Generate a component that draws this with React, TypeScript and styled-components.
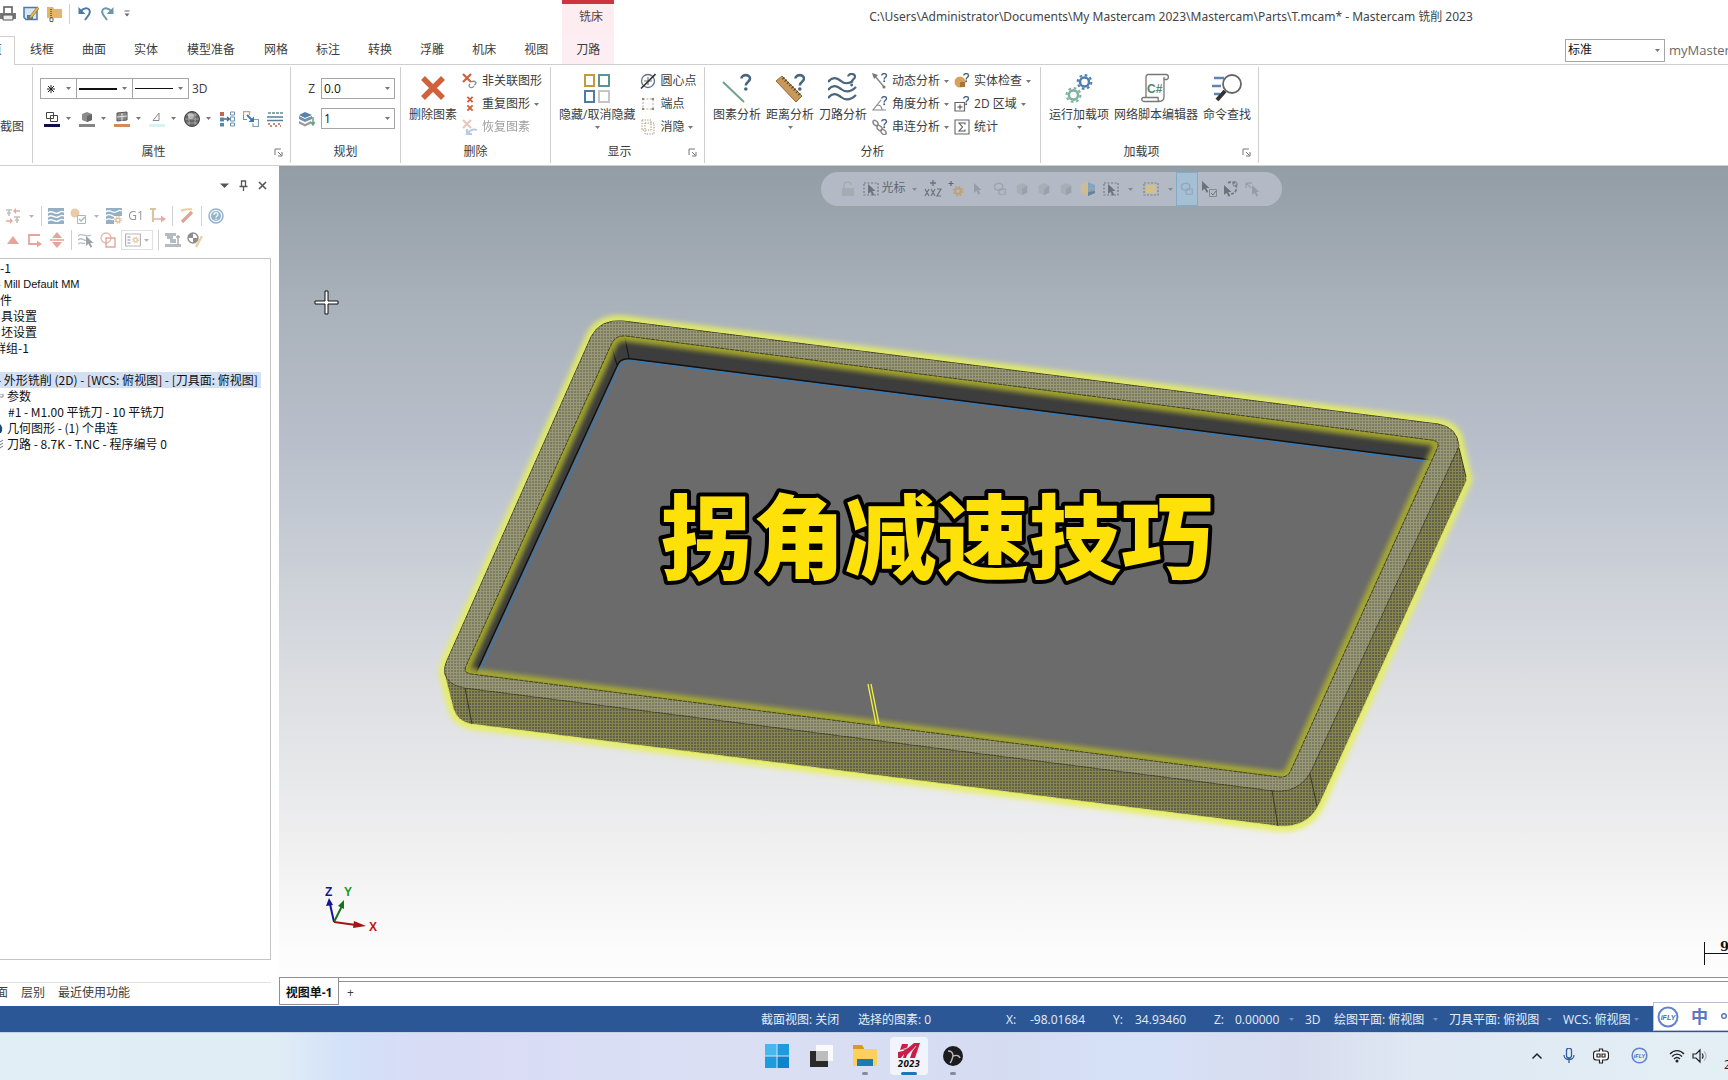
import React from "react";
import styled, { createGlobalStyle, css } from "styled-components";

const sans = `"Open Sans", "Noto Sans", "Noto Sans CJK SC", sans-serif`;
const line = "#cfcfcf";

const Global = createGlobalStyle`
  * { box-sizing: border-box; }
  html, body { margin: 0; height: 100%; }
  body { font: 12px/16px ${sans}; color: #3c3c3c; background: #fff; overflow: hidden; }
  button, select, input { font: inherit; color: inherit; margin: 0; padding: 0; border: 0; background: none; border-radius: 0; }
  svg { display: block; flex: none; }
`;

const Page = styled.div`
  display: flex;
  flex-direction: column;
  height: 100vh;
  overflow: hidden;
  white-space: nowrap;
`;

/* ---------- title bar and tabs ---------- */
const TitleBar = styled.header`
  display: flex;
  flex: none;
  height: 36px;
`;
const QuickAccess = styled.div`
  display: flex;
  width: 562px;
  height: 28px;
  align-items: center;
  gap: 7px;
`;
const QuickButton = styled.button<{ $w?: number }>`
  display: flex;
  width: ${(p) => p.$w ?? 16}px;
  justify-content: center;
`;
const QuickSep = styled.span`
  width: 1px;
  height: 20px;
  background: ${line};
`;
const ContextHead = styled.div`
  width: 52px;
  padding: 5px 0 0 17px;
  border-top: 4px solid #cb3440;
  background: #fdecf0;
  color: #5a3c40;
`;
const WindowTitle = styled.div`
  flex: 1;
  padding-top: 9px;
  text-align: center;
  color: #444;
  font-family: "Noto Sans", "Noto Sans CJK SC", sans-serif;
`;
const TabBar = styled.nav`
  display: flex;
  flex: none;
  height: 29px;
  border-bottom: 1px solid ${line};
`;
const Tab = styled.button<{ $wide?: boolean; $context?: boolean }>`
  padding: 0 ${(p) => (p.$wide ? 15 : 14)}px;
  background: ${(p) => (p.$context ? "#fceef2" : "none")};
`;
const ActiveTab = styled.button`
  display: flex;
  justify-content: flex-end;
  width: 15px;
  height: 29px;
  margin-right: 1px;
  padding: 5px 12px 0 0;
  overflow: hidden;
  border: 1px solid ${line};
  border-width: 1px 1px 0 0;
  background: #fff;
`;
const TabTools = styled.div`
  display: flex;
  align-items: center;
  gap: 4px;
  width: 163px;
  margin-left: auto;
  overflow: hidden;
  font-size: 13px;
  color: #6a6a6a;
`;

const Select = styled.select<{ $w: number; $h?: number }>`
  flex: none;
  width: ${(p) => p.$w}px;
  height: ${(p) => p.$h ?? 21}px;
  padding: 0 14px 0 2px;
  border: 1px solid #a6a6a6;
  appearance: none;
  color: #111;
  font-size: 12px;
  background: #fff url("data:image/svg+xml,%3Csvg xmlns='http://www.w3.org/2000/svg' width='5' height='3'%3E%3Cpath d='M0 0h5L2.5 3z' fill='%23777'/%3E%3C/svg%3E") no-repeat right 4px center;
`;

/* ---------- ribbon ---------- */
const Ribbon = styled.section`
  display: flex;
  flex: none;
  height: 101px;
  padding: 2px 0;
  border-bottom: 1px solid ${line};
`;
const Group = styled.div<{ $w: number }>`
  display: flex;
  flex-direction: column;
  flex: none;
  width: ${(p) => p.$w}px;
  border-right: 1px solid ${line};
`;
const GroupBody = styled.div<{ $gap?: number; $pad?: number }>`
  display: flex;
  flex: 1;
  gap: ${(p) => p.$gap ?? 4}px;
  padding: 0 4px 0 ${(p) => p.$pad ?? 8}px;
`;
const GroupFoot = styled.div`
  display: flex;
  align-items: center;
  height: 20px;
  margin-bottom: 1px;
  text-align: center;
`;
const FootText = styled.span`
  flex: 1;
`;
const Launcher = styled.button`
  display: flex;
  justify-content: flex-start;
  width: 16px;
`;
const Big = styled.button`
  display: flex;
  flex-direction: column;
  align-items: center;
  flex: none;
  padding-top: 6px;
`;
const BigText = styled.span`
  margin: 4px 0 3px;
`;
const SmallCol = styled.div`
  display: flex;
  flex-direction: column;
  padding-top: 3px;
  gap: 1px;
`;
const Small = styled.button<{ $off?: boolean }>`
  display: flex;
  align-items: center;
  gap: 4px;
  height: 22px;
  opacity: ${(p) => (p.$off ? 0.5 : 1)};
`;
const AttrCol = styled.div`
  display: flex;
  flex-direction: column;
  gap: 9px;
  padding-top: 11px;
`;
const AttrRow = styled.div`
  display: flex;
  align-items: center;
  height: 21px;
`;
const Picker = styled.button<{ $w: number }>`
  display: flex;
  align-items: center;
  justify-content: space-between;
  width: ${(p) => p.$w}px;
  height: 21px;
  padding: 0 5px 0 2px;
  border: 1px solid #a6a6a6;
  margin-right: -1px;
`;
const AttrText = styled.span`
  margin-left: 4px;
`;
const Swatch = styled.button<{ $w?: number }>`
  display: flex;
  align-items: center;
  justify-content: space-between;
  width: ${(p) => p.$w ?? 27}px;
  margin: 0 4px;
`;
const FieldLabel = styled.label`
  display: flex;
  align-items: center;
  justify-content: flex-end;
  width: 21px;
  margin-right: 2px;
  padding-right: 4px;
`;
const Snap = styled.div`
  display: flex;
  width: 32px;
  padding-top: 52px;
`;

/* ---------- left panel ---------- */
const Main = styled.main`
  display: flex;
  flex: 1;
  min-height: 0;
`;
const Panel = styled.aside`
  display: flex;
  flex-direction: column;
  flex: none;
  width: 279px;
`;
const PanelHead = styled.div`
  display: flex;
  align-items: center;
  justify-content: flex-end;
  gap: 8px;
  height: 38px;
  padding-right: 11px;
`;
const ToolRow = styled.div`
  display: flex;
  align-items: center;
  gap: 4px;
  height: 24px;
  padding-left: 4px;
  opacity: 0.55;
`;
const Tool = styled.button<{ $w?: number; $boxed?: boolean }>`
  display: flex;
  align-items: center;
  justify-content: center;
  gap: 3px;
  width: ${(p) => p.$w ?? 18}px;
  height: 18px;
  ${(p) => p.$boxed && css`border: 1px solid #c4c8d0; height: 20px;`}
`;
const ToolSep = styled.span`
  width: 1px;
  height: 20px;
  margin: 0 1px;
  background: #aaa;
`;
const Tree = styled.ul`
  flex: 1;
  margin: 6px 8px 0 0;
  padding: 1px 0;
  list-style: none;
  overflow: hidden;
  border: 1px solid #c4c4c4;
  border-left: 0;
  color: #111;
`;
const Node = styled.li<{ $in: number; $on?: boolean; $latin?: boolean }>`
  display: flex;
  align-items: center;
  gap: 3px;
  width: max-content;
  height: 16px;
  padding-left: ${(p) => Math.max(p.$in, 0)}px;
  padding-right: 3px;
  margin-left: ${(p) => Math.min(p.$in, 0)}px;
  font-size: ${(p) => (p.$latin ? 11 : 12)}px;
  font-family: ${(p) => (p.$latin ? `"Liberation Sans"` : `"Noto Sans CJK SC"`)}, sans-serif;
  background: ${(p) => (p.$on ? "#d3dff2" : "none")};
`;
const PanelTabs = styled.div`
  display: flex;
  gap: 13px;
  height: 24px;
  margin: 22px 8px 0 -4px;
  padding-bottom: 4px;
  border-top: 1px solid #e2e2e2;
`;
const PlainButton = styled.button``;

/* ---------- viewport ---------- */
const View = styled.section`
  display: flex;
  flex-direction: column;
  flex: 1;
  min-width: 0;
`;
const Canvas = styled.div`
  position: relative;
  flex: 1;
  min-height: 0;
  background: linear-gradient(#929da5, #a9b1ba 17%, #b8bfca 34%, #c9ced6 48%, #dcdee2 64%, #eeeeef 82%, #fcfcfc 97%, #fdfdfd);
`;
const Scene = styled.svg`
  width: 100%;
  height: 100%;
`;
const FloatBar = styled.div`
  position: absolute;
  top: 6px;
  left: 542px;
  display: flex;
  align-items: center;
  height: 34px;
  padding: 0 18px 0 16px;
  border-radius: 17px;
  background: #b3bac5;
  color: #5f6670;
`;
const FloatButton = styled.button<{ $w?: number; $on?: boolean; $dim?: boolean }>`
  display: flex;
  align-items: center;
  justify-content: center;
  gap: 2px;
  width: ${(p) => p.$w ?? 22}px;
  height: 34px;
  ${(p) => p.$on && css`border: 1px solid #83abc9; background: #a5bfd4;`}
  & > svg { opacity: ${(p) => (p.$dim ? 0.28 : 0.7)}; }
`;
const FloatText = styled.span`
  padding: 0 4px 3px 0;
`;
const Sheets = styled.div`
  display: flex;
  flex: none;
  height: 29px;
  border-top: 1px solid #909090;
`;
const Sheet = styled.button`
  width: 60px;
  height: 27px;
  padding-top: 4px;
  border: 1px solid #909090;
  border-top: 0;
  color: #111;
  font-weight: 700;
`;
const SheetRest = styled.div`
  flex: 1;
  margin-top: 3px;
  padding: 3px 8px;
  border-top: 1px solid #909090;
`;

/* ---------- status and task bars ---------- */
const Status = styled.footer`
  position: relative;
  display: flex;
  flex: none;
  align-items: center;
  justify-content: flex-end;
  height: 26px;
  padding: 1px 78px 0 0;
  background: #2b5797;
  color: #e6edf6;
`;
const Cell = styled.span<{ $w: number }>`
  flex: none;
  width: ${(p) => p.$w}px;
`;
const DropCell = styled.button<{ $w: number }>`
  display: flex;
  flex: none;
  align-items: center;
  justify-content: space-between;
  width: ${(p) => p.$w}px;
  padding-right: 11px;
`;
const Ime = styled.div`
  position: absolute;
  right: 0;
  bottom: 1px;
  display: flex;
  align-items: center;
  gap: 12px;
  width: 75px;
  height: 29px;
  padding-left: 3px;
  overflow: hidden;
  border: 1px solid #b5bfd4;
  border-right: 0;
  background: #fff;
  color: #5b78c2;
`;
const ImeMode = styled.button`
  font-size: 17px;
  font-weight: 700;
`;
const Taskbar = styled.footer`
  display: grid;
  grid-template-columns: 1fr auto 1fr;
  flex: none;
  height: 48px;
  border-top: 1px solid #c5d2ea;
  background: linear-gradient(90deg, #e1eef5, #e1edf5 16%, #d3e1f9 20%, #d9dcf5 25%, #dbdff4 43%, #d5dcf2 58%, #d6e1f7 66%, #d8dcef 75%, #dfe8f3 82%, #e4eff5);
`;
const Dock = styled.div`
  display: flex;
  grid-column: 2;
  align-items: center;
  gap: 6px;
  padding: 0 0 2px 1px;
`;
const DockButton = styled.button<{ $on?: boolean; $mark?: boolean }>`
  display: flex;
  flex-direction: column;
  align-items: center;
  justify-content: flex-end;
  width: 38px;
  height: 38px;
  border-radius: 4px;
  background: ${(p) => (p.$on ? "#f2f4fc" : "none")};
  &::after {
    content: "";
    width: ${(p) => (p.$on ? 16 : 6)}px;
    height: 3px;
    margin-top: 4px;
    border-radius: 2px;
    background: ${(p) => (p.$on ? "#1b76bd" : p.$mark ? "#868a9c" : "none")};
  }
`;
const Tray = styled.div`
  display: flex;
  align-items: center;
  justify-content: flex-end;
  padding-bottom: 2px;
  overflow: hidden;
  color: #222;
`;
const TrayButton = styled.button<{ $w: number }>`
  display: flex;
  flex: none;
  justify-content: center;
  width: ${(p) => p.$w}px;
`;
const Clock = styled.span`
  width: 21px;
  padding: 18px 0 0 17px;
  overflow: hidden;
`;

/* ---------- icons ---------- */
type IconProps = { s?: number; v?: number; children: React.ReactNode };
const Ico = ({ s = 16, v = 16, children }: IconProps) => (
  <svg width={s} height={s} viewBox={`0 0 ${v} ${v}`} fill="none" aria-hidden="true">{children}</svg>
);
const Caret = ({ c = "#777" }: { c?: string }) => (
  <svg width="5" height="3" viewBox="0 0 5 3" aria-hidden="true"><path d="M0 0h5L2.5 3z" fill={c} /></svg>
);
const q = "#4a6580";
const Ask = ({ x = 0, y = 0, k = 1 }: { x?: number; y?: number; k?: number }) => (
  <g transform={`translate(${x} ${y}) scale(${k})`}>
    <path d="M1.500 4.500C1.500 0 10 0 10 4.600c0 3.200-4.200 3-4.200 7" stroke={q} strokeWidth="2.600" fill="none" />
    <circle cx="5.800" cy="15" r="1.800" fill={q} />
  </g>
);
const gear = (cx: number, cy: number, r: number, c: string, sw: number) => (
  <g stroke={c} fill="none">
    <circle cx={cx} cy={cy} r={r} strokeWidth={sw} />
    <circle cx={cx} cy={cy} r={r + sw * 0.9} strokeWidth={sw * 0.8} strokeDasharray={`${(r + sw * 0.9) * 0.39} ${(r + sw * 0.9) * 0.395}`} />
  </g>
);
const Cross = ({ x, y, r, w, c = "#d1603d" }: { x: number; y: number; r: number; w: number; c?: string }) => (
  <path d={`M${x - r} ${y - r}L${x + r} ${y + r}M${x + r} ${y - r}L${x - r} ${y + r}`} stroke={c} strokeWidth={w} />
);
const pointer = (x: number, y: number, c = "#4f565e") => (
  <path d={`M${x} ${y}v10l2.500-2.300 2 4 1.800-.9-2-3.800h3.200z`} fill={c} />
);

const I = {
  print: <Ico><path d="M4 7V1h8v6" stroke="#555" strokeWidth="1.500" /><path d="M0 7h16v6H0z" fill="#777" /><path d="M3 9h10v5H3z" fill="#eee" stroke="#555" /></Ico>,
  saveAs: <Ico><path d="M1 1.500h13v12H3l-2-2z" fill="#d9e6f2" stroke="#4a7aa5" strokeWidth="1.500" /><path d="M4 9h6v5H4z" fill="#4a7aa5" /><path d="M7 10 14 1l2 1.500L9 11.500l-3 1z" fill="#e8b54a" stroke="#8a6a2a" strokeWidth=".6" /></Ico>,
  zip: <Ico><path d="M1 1h6l1 2h8v9H1z" fill="#e3b66b" /><path d="M5 3v10" stroke="#7a6540" strokeWidth="2" strokeDasharray="1 1" /><path d="M4 12h3v3.500H4z" stroke="#666" fill="#fff" /></Ico>,
  undo: <Ico><path d="M3 5.500C9-.5 15 3 12 8.500L8 14" stroke="#4b7ba5" strokeWidth="2" /><path d="M1.500 1v7h7z" fill="#4b7ba5" /></Ico>,
  redo: <Ico><path d="M12 5.500C6-.5 0 3 3 8.500L7 14" stroke="#6b96ae" strokeWidth="2" /><path d="M13.500 1v7h-7z" fill="#6b96ae" /></Ico>,
  more: <Ico s={8} v={8}><path d="M1.500 1h5" stroke="#666" /><path d="M1.500 3.500h5L4 6.500z" fill="#666" /></Ico>,
  launch: <Ico s={9} v={9}><path d="M1 7V1h6M4 4l3.500 3.500M8 4v4H4" stroke="#777" /></Ico>,
  star: <Ico s={14} v={14}><path d="M8 3v8M4 7h8M5 4l6 6M11 4l-6 6" stroke="#222" /></Ico>,
  wire: <Ico><path d="M2.500 1.500h7v6h-7zM6.500 4.500h7v6h-7z" stroke="#444" /><path d="M0 13h16v3H0z" fill="#0d0d50" /></Ico>,
  solid: <Ico><path d="M3 3l5-2 5 2v6l-5 2-5-2z" fill="#8b8b8b" /><path d="M8 5l5-2v6l-5 2z" fill="#666" /><path d="M0 13h16v3H0z" fill="#858585" /></Ico>,
  surface: <Ico><path d="M3 2l10-1v8L3 10z" fill="#8a8a8a" stroke="#555" /><path d="M3 6l10-1M8 2v8" stroke="#e5e5e5" /><path d="M0 13h16v3H0z" fill="#d28a5c" /></Ico>,
  tri: <Ico><path d="M4 9.500h6V2z" stroke="#888" /><path d="M0 13h16v3H0z" fill="#d8f3f3" /></Ico>,
  globe: <Ico><circle cx="8" cy="8" r="7.500" fill="#666" stroke="#444" /><path d="M3 4h10M1 8h14M3 12h10M5 2v12M11 2v12" stroke="#bbb" strokeWidth=".7" /><circle cx="7" cy="5" r="3" fill="#fff" opacity=".5" /></Ico>,
  change: <Ico><path d="M1 1h4v4H1z" fill="#c4654d" /><path d="M1 6.500h4v4H1z" fill="#5c86a8" /><path d="M1 12h4v3.500H1z" fill="#5c86a8" /><path d="M11.500 1h4v3h-4zM11.500 6h4v4h-4zM11.500 12h4v3h-4z" stroke="#6d8fa8" /><path d="M5 8h5M8 6l2.500 2L8 10" stroke="#3b6f9b" strokeWidth="1.300" /></Ico>,
  copy: <Ico><path d="M.5 4V.5h6V4" stroke="#d9a15b" strokeWidth="1.300" /><path d="M.5 4v4.500H4" stroke="#6b9e88" strokeWidth="1.200" /><path d="M10 8.500h5.500v7H10v-3" stroke="#78a6b4" strokeWidth="1.200" /><path d="M4 4l6 6" stroke="#3f79a8" strokeWidth="2" /><path d="M11 5.500V11H5.500z" fill="#3f79a8" /></Ico>,
  lines: <Ico><path d="M1 2h15" stroke="#5e8f8a" strokeDasharray="3 1" strokeWidth="1.500" /><path d="M0 6h16M0 9.500h16" stroke="#557f9b" strokeWidth="1.500" /><path d="M1 13h15M3 15h11" stroke="#c06040" strokeDasharray="2 3" strokeWidth="1.500" /></Ico>,
  layers: <Ico><path d="M0 4l6-3 7 3-7 3z" fill="#5684ad" /><path d="M0 5l6 3 7-3v3l-7 3-6-3z" fill="#6b90b0" /><path d="M0 10l6 3 6-3v2.500l-6 3-6-3z" fill="#9a9a9a" /><path d="M14 6v7M12 11l2 3 2-3" stroke="#6aa37e" strokeWidth="1.500" /></Ico>,
  del: <Ico s={30} v={30}><Cross x={15} y={15} r={10} w={5.5} /></Ico>,
  nonAssoc: <Ico><Cross x={5} y={5} r={4} w={2.2} /><path d="M9 9c4-2 7 1 3 3M8 11c-3 3 2 5 4 2" stroke="#78929c" strokeWidth="1.300" /></Ico>,
  dup: <Ico><Cross x={8} y={3.5} r={2.6} w={1.9} /><Cross x={8} y={12} r={2.6} w={1.9} /></Ico>,
  undel: <Ico><Cross x={5} y={5} r={4} w={2.2} c="#d99078" /><path d="M5 10v5h5M6 14c3-4 6-4 9-3" stroke="#7899c4" strokeWidth="2.200" /></Ico>,
  hide: <Ico s={30} v={30}><g strokeWidth="2"><path d="M3 2h9v11H3z" stroke="#c59a3e" /><path d="M17 2h10v11H17z" stroke="#5b9490" /><path d="M3 18h9v11H3z" stroke="#4f7ca3" /><path d="M17 18h10v11H17z" stroke="#c5c5c5" /></g></Ico>,
  arc: <Ico><circle cx="8" cy="8" r="6.500" stroke="#5a7390" strokeWidth="1.300" /><path d="M8 4v8M4 8h8" stroke="#777" strokeWidth="1.200" /><path d="M1 15.500 15.500 1" stroke="#333" strokeWidth="1.600" /></Ico>,
  ends: <Ico><path d="M3 3h10v10H3z" stroke="#a7a7a7" strokeDasharray="2 1.500" /><path d="M2 2h2v2H2zM12 2h2v2h-2zM2 12h2v2H2zM12 12h2v2h-2z" fill="#a08668" /></Ico>,
  blank: <Ico><path d="M2 1h9v10H2zM5 4h9v11H5z" stroke="#9b9268" strokeDasharray="1.300 1.300" /></Ico>,
  entity: <Ico s={30} v={30}><path d="M1 9l21 20" stroke="#6ea38c" strokeWidth="2" /><Ask x={18} y={1} /></Ico>,
  ruler: <Ico s={30} v={30}><path d="M1 8l6-5 20 20-6 6z" fill="#c9995b" stroke="#8f6a3c" /><path d="M8 5l18 18" stroke="#4f3c22" strokeWidth="3" strokeDasharray="1 2.200" /><Ask x={19} y={1} /></Ico>,
  path: <Ico s={30} v={30}><g stroke={q} strokeWidth="2.200"><path d="M0 9c5-6 9-4 13-1 3 3 8 3 12 0" /><path d="M0 17c5-6 9-4 13-1 5 4 10 3 15-2" /><path d="M0 25c5-6 9-4 13-1 5 4 10 3 15-2" /></g><Ask x={19} y={0} k={0.8} /></Ico>,
  dyn: <Ico><path d="M3 3l9 11" stroke="#888" strokeWidth="1.500" /><path d="M0 0l6 2-4 4z" fill="#777" /><circle cx="12" cy="14" r="1.500" fill="#777" /><Ask x={9} y={0} k={0.55} /></Ico>,
  angle: <Ico><path d="M9 4 1 14h13M5 9c4 0 5 3 5 5" stroke="#888" strokeWidth="1.200" /><Ask x={9} y={0} k={0.55} /></Ico>,
  chain: <Ico><g stroke="#888" strokeWidth="1.500"><ellipse cx="3.500" cy="4" rx="3" ry="2" transform="rotate(45 3.500 4)" /><ellipse cx="7.500" cy="9" rx="3" ry="2" transform="rotate(45 7.500 9)" /><ellipse cx="11.500" cy="13" rx="3" ry="2" transform="rotate(45 11.500 13)" /></g><Ask x={9} y={0} k={0.55} /></Ico>,
  check: <Ico><circle cx="6" cy="9" r="5.500" fill="#d7a35b" /><path d="M6 9h5v5H6z" fill="#a87538" /><Ask x={9} y={0} k={0.55} /></Ico>,
  area: <Ico><path d="M1 6.500h9.500v8.500H1z" stroke="#666" strokeWidth="1.200" /><path d="M6 8.500v5M3.500 11h5" stroke="#444" /><Ask x={9} y={0} k={0.55} /></Ico>,
  stat: <Ico><path d="M1 1h14v14H1z" stroke="#666" strokeWidth="1.100" /><path d="M11 5.500V4H5l3.500 4L5 12h6v-1.500" stroke="#555" strokeWidth="1.100" /></Ico>,
  gears: <Ico s={30} v={30}>{gear(20.5, 9, 4.5, "#4e7fb3", 2.6)}{gear(9.5, 22, 4.6, "#7fb3a1", 2.6)}</Ico>,
  script: <Ico s={30} v={30}><path d="M5 24V4c0-3 4-3 4-2M8 1.500h17c3 0 3 4 1 5h-3v17c0 5-4 5-5 5H3c-3 0-3-4 0-4h14c0 3 1 4 2 4M23 6V4" stroke="#777" strokeWidth="1.300" /><text x="6" y="20" fontSize="12" fontWeight="700" fill="#4e8a70" fontFamily="Liberation Sans, sans-serif">C#</text></Ico>,
  find: <Ico s={30} v={30}><path d="M2 5h10M0 13h9M2 21h6" stroke="#6185ad" strokeWidth="2.600" /><circle cx="20" cy="11" r="9" stroke="#666" strokeWidth="1.800" fill="#fff" /><path d="M13 18l-8 9" stroke="#333" strokeWidth="4" /></Ico>,
};

const P = {
  select: <Ico><path d="M1 2h6M4 2v6M2 5h4M9 9h6M12 9v6M10 12h4" stroke="#8a8f86" strokeWidth="1.600" /><path d="M9 3h6M1 13h6" stroke="#cf6548" strokeWidth="1.400" /><path d="M11 0 8 3l3 3zM5 10l3 3-3 3z" fill="#cf6548" /></Ico>,
  regen: <Ico><path d="M0 0h16v16H0z" fill="#3c7094" /><path d="M0 5c4-4 6 2 10 0s4-2 6-1M0 9c4-4 6 2 10 0s4-2 6-1M0 13c4-4 6 2 10 0s4-2 6-1" stroke="#fff" strokeWidth="1.400" /></Ico>,
  verify: <Ico><circle cx="5" cy="5" r="4.500" fill="#d8a066" /><path d="M7.500 7.500h8v8h-8z" stroke="#777" fill="#fff" /><path d="M9 11l2 2 4-4" stroke="#588" strokeWidth="1.400" /></Ico>,
  sim: <Ico><path d="M0 0h16v8H8v8H0z" fill="#3c7094" /><path d="M0 4c4-4 6 2 10 0s4-2 6-1M0 8c4-4 6 1 8 0M0 12c3-3 5 1 8-1" stroke="#fff" strokeWidth="1.300" />{gear(12, 12, 2, "#c39146", 1.5)}</Ico>,
  post: <Ico><path d="M0 1h6M3 1v13" stroke="#b29b55" strokeWidth="2.200" /><path d="M4 11h8" stroke="#d16b55" strokeWidth="1.500" /><path d="M11 7.500l5 3.500-5 3.500z" fill="#d16b55" /></Ico>,
  feed: <Ico><path d="M2 3c4-3 8-1 11-2" stroke="#d8aa55" strokeWidth="2.200" /><path d="M3 14 13 4" stroke="#c55a43" strokeWidth="3.200" /></Ico>,
  help: <Ico><circle cx="8" cy="8" r="7" fill="#eaf2f8" stroke="#3d79a8" strokeWidth="1.500" /><circle cx="8" cy="8" r="5" fill="#3d79a8" /><path d="M6 7c0-3 4-3 4-.5C10 8 8 8 8 9.500M8 10.500v1.500" stroke="#fff" strokeWidth="1.200" /></Ico>,
  up: <Ico><path d="M2 12h12L8 4z" fill="#cf5f48" /></Ico>,
  move: <Ico><path d="M13 3H2v9h9" stroke="#cf5f48" strokeWidth="1.800" /><path d="M10 8.500l5 3.500-5 3.500z" fill="#cf5f48" /></Ico>,
  split: <Ico><path d="M1 8h14" stroke="#cf5f48" strokeWidth="1.600" /><path d="M3 6h10L8 0zM3 10h10l-5 6z" fill="#cf5f48" /></Ico>,
  pick: <Ico><path d="M0 4c4-4 7 2 13-1M0 8c4-4 6 2 8 0M0 12c3-3 4 1 7-1" stroke="#7b8d98" strokeWidth="1.300" />{pointer(8, 4)}</Ico>,
  shapes: <Ico><circle cx="6" cy="6" r="5" stroke="#d1826f" strokeWidth="1.300" /><path d="M6 6h9v9H6z" stroke="#c9604b" strokeWidth="1.400" /></Ico>,
  outline: <Ico s={14}><path d="M2 3l5-2 4 2v5l-4 2-5-2zM7 8h7v6H7z" stroke="#5f6770" strokeWidth="1.400" /></Ico>,
  display: <Ico><path d="M.6 2h14.800v12H.6z" stroke="#7c7c7c" strokeWidth="1.200" /><path d="M2.500 5h3M2.500 8h3M2.500 11h3" stroke="#6e7b85" strokeWidth="1.500" />{gear(10.5, 8, 1.8, "#c3995e", 1.3)}</Ico>,
  machine: <Ico><path d="M0 1h11v3H8v3h3v4H5v-4H2V4H0zM0 12h16v3H0z" fill="#7c8593" /><path d="M13 3v10M11 5h4" stroke="#667" strokeWidth="1.500" /></Ico>,
  edit: <Ico><circle cx="6" cy="6" r="5" fill="#fff" stroke="#333" strokeWidth="1.400" /><path d="M6 1v5H1a5 5 0 0 1 5-5zM6 11V6h5a5 5 0 0 1-5 5z" fill="#333" /><path d="M9 15l6-11" stroke="#d9a850" strokeWidth="2.200" /></Ico>,
  cube: <Ico s={14}><path d="M2 4l6-3 6 3v8l-6 3-6-3z" fill="#8a9098" /><path d="M8 8l6-4v8l-6 3z" fill="#5c646e" /></Ico>,
  arrow: <Ico>{pointer(4, 2)}</Ico>,
  lock: <Ico><path d="M2 7h12v8H2z" fill="#888" /><path d="M4 7V4c0-4 7-4 7 0" stroke="#888" strokeWidth="1.500" /></Ico>,
  box: <Ico><path d="M1 2h14v12H1z" stroke="#59616b" strokeDasharray="2 1.500" strokeWidth="1.200" />{pointer(5, 3)}</Ico>,
  xyz: <Ico s={18} v={18}><path d="M9 0v6M6 3h6" stroke="#555" strokeWidth="1.300" /><path d="M1 9l4 7M5 9l-4 7M7 9l4 7M11 9l-4 7M13 9h4l-4 7h4" stroke="#555" strokeWidth="1.200" /></Ico>,
  plusGear: <Ico><path d="M3 0v5M.5 2.500h5" stroke="#444" strokeWidth="1.200" />{gear(10, 10, 2.8, "#c0985b", 2)}</Ico>,
  face: <Ico><path d="M1 4l7-3v14l-7-3z" fill="#d9bd82" /><path d="M8 1l7 3v4L8 7z" fill="#6e9dc0" /><path d="M8 7l7 1v4l-7 3z" fill="#7f99ad" /><path d="M8 11l7-1v2l-7 3z" fill="#456f8c" /></Ico>,
  yellow: <Ico><path d="M3 4h10v8H3z" fill="#e0c572" /><path d="M1 2h14v12H1z" stroke="#716a58" strokeDasharray="2 1.500" strokeWidth="1.200" /></Ico>,
  tick: <Ico>{pointer(1, 0)}<path d="M8.500 8.500h7v7h-7z" stroke="#777" /><path d="M10 12l2 2 3-4" stroke="#555" /></Ico>,
  cycle: <Ico>{pointer(1, 4)}<path d="M5 2c5-3 10 1 8 7-1 3-3 4-6 4" stroke="#5a626b" strokeDasharray="3 1.500" strokeWidth="1.800" /><circle cx="12" cy="3" r="2.200" stroke="#5a626b" /></Ico>,
  last: <Ico><path d="M1 2h6M1 2v5M1 2l5 5" stroke="#59616b" strokeWidth="1.300" />{pointer(7, 4)}</Ico>,
};

const DropIcon = ({ icon, label }: { icon: React.ReactNode; label: string }) => (
  <Swatch aria-label={label}>{icon}<Caret /></Swatch>
);
const BigCmd = ({ icon, text, drop }: { icon: React.ReactNode; text: string; drop?: boolean }) => (
  <Big>{icon}<BigText>{text}</BigText>{drop && <Caret />}</Big>
);
const SmallCmd = ({ icon, text, drop, off }: { icon: React.ReactNode; text: string; drop?: boolean; off?: boolean }) => (
  <Small $off={off} disabled={off}>{icon}<span>{text}</span>{drop && <Caret />}</Small>
);
const Foot = ({ text, more }: { text: string; more?: boolean }) => (
  <GroupFoot><FootText>{text}</FootText>{more && <Launcher aria-label={`${text} 选项`}>{I.launch}</Launcher>}</GroupFoot>
);

const outer = "M623 321L1438 424Q1457 427 1459 446L1467 480L1320 803Q1308 829 1277 826L470 724Q457 721 453 708L445 676Q443 668 449 656L591 337Q600 319 623 321Z";
const topEdge = "M623 321L1438 424Q1457 427 1459 446L1313 767Q1302 793 1274 791L465 688Q448 685 445 674Q443 668 449 656L591 337Q600 319 623 321Z";
const inner = "M626 336L1431 440Q1441 441 1437 449L1291 770Q1288 778 1279 777L471 674Q463 673 466 666L611 345Q615 335 626 336Z";
const floor = "M632 359L1430 460L1288 776L476 673L617 366Q620 357 632 359Z";

const Part = () => (
  <Scene viewBox="279 166 1449 811" preserveAspectRatio="xMinYMin meet" aria-label="零件视图" role="img">
    <defs>
      <pattern id="mesh" width="3" height="3" patternUnits="userSpaceOnUse">
        <path d="M0 .5h3M.5 0v3" stroke="#a3a352" strokeWidth="1" opacity=".55" />
      </pattern>
      <pattern id="meshTop" width="3" height="3" patternUnits="userSpaceOnUse">
        <path d="M0 .5h3M.5 0v3" stroke="#b0b084" strokeWidth="1" opacity=".55" />
      </pattern>
      <filter id="glow" x="-5%" y="-5%" width="110%" height="110%"><feGaussianBlur stdDeviation="2.500" /></filter>
      <clipPath id="pocket"><path d={inner} /></clipPath>
    </defs>
    <path d={outer} fill="none" stroke="#e6ef5e" strokeWidth="11" opacity=".9" filter="url(#glow)" />
    <path d={outer} fill="#62624a" stroke="#e6ea66" strokeWidth="1" />
    <path d={outer} fill="url(#mesh)" />
    <path d={topEdge} fill="#7c7c64" stroke="#3f3f28" strokeWidth="1" />
    <path d={topEdge} fill="url(#meshTop)" />
    <path d="M465 688l7 36M1272 790l6 36M1310 774l7 32M1459 448l7 29" stroke="#3a3a22" />
    <path d={inner} fill="#3d3d3d" />
    <g clipPath="url(#pocket)">
      <path d={floor} fill="#6b6b6b" />
      <path d="M476 673L617 366Q620 357 632 359L1432 460" fill="none" stroke="#111" strokeWidth="1.500" />
      <path d="M479 673L620 367Q623 360 632 361L1430 462" fill="none" stroke="#3c78b0" strokeWidth="1.500" />
      <path d="M611 345l6 20M625 338l4 20" stroke="#111" />
      <path d={inner} fill="none" stroke="#b2b62c" strokeWidth="11" opacity=".85" filter="url(#glow)" />
    </g>
    <path d={inner} fill="none" stroke="#45451f" strokeDasharray="4 1" />
    <path d="M868 684l8 40M871 684l8 40" stroke="#eef03c" strokeWidth="1.300" />
    <text x="661" y="572" fontSize="92" fontWeight="900" fontFamily='"Noto Sans CJK SC", sans-serif' fill="#ffe10a" stroke="#000" strokeWidth="8" strokeLinejoin="round" paintOrder="stroke">拐角减速技巧</text>
    <path d="M325 291h3v10h10v3h-10v10h-3v-10h-10v-3h10z" fill="#fff" stroke="#111" />
    <g strokeWidth="2" fontFamily="Liberation Sans, sans-serif" fontSize="12" fontWeight="700">
      <path d="M334 922l-4-18" stroke="#141496" /><path d="M326 906l3-8 4 7z" fill="#141496" />
      <path d="M334 922l8-16" stroke="#15731f" /><path d="M338 906l6-6v9z" fill="#15731f" />
      <path d="M334 922l22 3" stroke="#a31515" /><path d="M354 921l12 5-13 2z" fill="#a31515" />
      <text x="325" y="896" fill="#141496">Z</text>
      <text x="344" y="896" fill="#159a28">Y</text>
      <text x="369" y="931" fill="#c41414">X</text>
    </g>
    <path d="M1704.500 942v23M1704.500 953.500h24" stroke="#111" />
    <text x="1720" y="951" fontSize="13" fontWeight="700" fontFamily="DejaVu Serif, serif" fill="#111">9</text>
  </Scene>
);

const tabs = ["线框", "曲面", "实体", "模型准备", "网格", "标注", "转换", "浮雕", "机床", "视图"];

const IFly = ({ s }: { s: number }) => (
  <Ico s={s} v={22}><circle cx="11" cy="11" r="9.500" stroke="#6381cf" strokeWidth="2" /><text x="11" y="14" fontSize="7" fontWeight="700" fontStyle="italic" textAnchor="middle" fill="#4a69b8" fontFamily="Liberation Sans, sans-serif">iFLY</text></Ico>
);

export default function App() {
  return (
    <Page>
      <Global />
      <TitleBar>
        <QuickAccess>
          <QuickButton aria-label="打印">{I.print}</QuickButton>
          <QuickButton aria-label="另存为">{I.saveAs}</QuickButton>
          <QuickButton aria-label="压缩">{I.zip}</QuickButton>
          <QuickSep />
          <QuickButton aria-label="撤销">{I.undo}</QuickButton>
          <QuickButton aria-label="重做">{I.redo}</QuickButton>
          <QuickButton $w={8} aria-label="自定义">{I.more}</QuickButton>
        </QuickAccess>
        <ContextHead>铣床</ContextHead>
        <WindowTitle>C:\Users\Administrator\Documents\My Mastercam 2023\Mastercam\Parts\T.mcam* - Mastercam 铣削 2023</WindowTitle>
      </TitleBar>
      <TabBar>
        <ActiveTab>页</ActiveTab>
        {tabs.map((t) => <Tab key={t} $wide={t.length > 2}>{t}</Tab>)}
        <Tab $context>刀路</Tab>
        <TabTools>
          <Select $w={100} $h={23} aria-label="模式"><option>标准</option></Select>
          <span>myMastercam</span>
        </TabTools>
      </TabBar>

      <Ribbon>
        <Group $w={33}><Snap><PlainButton>截图</PlainButton></Snap></Group>
        <Group $w={258}>
          <GroupBody $pad={7}>
            <AttrCol>
              <AttrRow>
                <Picker $w={37} aria-label="点样式">{I.star}<Caret /></Picker>
                <Picker $w={57} aria-label="线宽"><svg width="38" height="2"><path d="M0 1h38" stroke="#111" strokeWidth="2" /></svg><Caret /></Picker>
                <Picker $w={57} aria-label="线型"><svg width="38" height="1"><path d="M0 .5h38" stroke="#111" /></svg><Caret /></Picker>
                <AttrText>3D</AttrText>
              </AttrRow>
              <AttrRow>
                <DropIcon icon={I.wire} label="线框颜色" />
                <DropIcon icon={I.solid} label="实体颜色" />
                <DropIcon icon={I.surface} label="曲面颜色" />
                <DropIcon icon={I.tri} label="网格颜色" />
                <DropIcon icon={I.globe} label="材质" />
                <Swatch $w={16} aria-label="设置全部">{I.change}</Swatch>
                <Swatch $w={16} aria-label="复制属性">{I.copy}</Swatch>
                <Swatch $w={16} aria-label="线属性">{I.lines}</Swatch>
              </AttrRow>
            </AttrCol>
          </GroupBody>
          <Foot text="属性" more />
        </Group>
        <Group $w={110}>
          <GroupBody $pad={7}>
            <AttrCol>
              <AttrRow>
                <FieldLabel htmlFor="zdepth">Z</FieldLabel>
                <Select id="zdepth" $w={74}><option>0.0</option></Select>
              </AttrRow>
              <AttrRow>
                <FieldLabel htmlFor="level" aria-label="层别">{I.layers}</FieldLabel>
                <Select id="level" $w={74}><option>1</option></Select>
              </AttrRow>
            </AttrCol>
          </GroupBody>
          <Foot text="规划" />
        </Group>
        <Group $w={150}>
          <GroupBody $gap={5}>
            <BigCmd icon={I.del} text="删除图素" />
            <SmallCol>
              <SmallCmd icon={I.nonAssoc} text="非关联图形" />
              <SmallCmd icon={I.dup} text="重复图形" drop />
              <SmallCmd icon={I.undel} text="恢复图素" off />
            </SmallCol>
          </GroupBody>
          <Foot text="删除" />
        </Group>
        <Group $w={154}>
          <GroupBody $gap={5}>
            <BigCmd icon={I.hide} text="隐藏/取消隐藏" drop />
            <SmallCol>
              <SmallCmd icon={I.arc} text="圆心点" />
              <SmallCmd icon={I.ends} text="端点" />
              <SmallCmd icon={I.blank} text="消隐" drop />
            </SmallCol>
          </GroupBody>
          <Foot text="显示" more />
        </Group>
        <Group $w={336}>
          <GroupBody $gap={5}>
            <BigCmd icon={I.entity} text="图素分析" />
            <BigCmd icon={I.ruler} text="距离分析" drop />
            <BigCmd icon={I.path} text="刀路分析" />
            <SmallCol>
              <SmallCmd icon={I.dyn} text="动态分析" drop />
              <SmallCmd icon={I.angle} text="角度分析" drop />
              <SmallCmd icon={I.chain} text="串连分析" drop />
            </SmallCol>
            <SmallCol>
              <SmallCmd icon={I.check} text="实体检查" drop />
              <SmallCmd icon={I.area} text="2D 区域" drop />
              <SmallCmd icon={I.stat} text="统计" />
            </SmallCol>
          </GroupBody>
          <Foot text="分析" />
        </Group>
        <Group $w={218}>
          <GroupBody $gap={5}>
            <BigCmd icon={I.gears} text="运行加载项" drop />
            <BigCmd icon={I.script} text="网络脚本编辑器" />
            <BigCmd icon={I.find} text="命令查找" />
          </GroupBody>
          <Foot text="加载项" more />
        </Group>
      </Ribbon>

      <Main>
        <Panel>
          <PanelHead>
            <PlainButton aria-label="菜单"><Ico s={11} v={11}><path d="M1 3.500h9L5.500 8z" fill="#555" /></Ico></PlainButton>
            <PlainButton aria-label="固定"><Ico s={11} v={11}><path d="M3.500 6V1h4v5M1.500 6.500h8M5.500 7v4" stroke="#555" strokeWidth="1.300" /></Ico></PlainButton>
            <PlainButton aria-label="关闭"><Ico s={11} v={11}><Cross x={5.5} y={5.5} r={3.5} w={1.6} c="#555" /></Ico></PlainButton>
          </PanelHead>
          <ToolRow>
            <Tool aria-label="选择">{P.select}</Tool><Tool $w={10} aria-label="选择菜单"><Caret /></Tool><ToolSep />
            <Tool aria-label="重新生成">{P.regen}</Tool><Tool aria-label="验证">{P.verify}</Tool><Tool $w={10} aria-label="验证菜单"><Caret /></Tool>
            <Tool aria-label="模拟">{P.sim}</Tool><Tool>G1</Tool><Tool aria-label="后处理">{P.post}</Tool><ToolSep />
            <Tool aria-label="高速进给">{P.feed}</Tool><ToolSep /><Tool aria-label="帮助">{P.help}</Tool>
          </ToolRow>
          <ToolRow>
            <Tool aria-label="上移">{P.up}</Tool><Tool aria-label="移动">{P.move}</Tool><Tool aria-label="展开">{P.split}</Tool><ToolSep />
            <Tool aria-label="拾取">{P.pick}</Tool><Tool aria-label="图形">{P.shapes}</Tool>
            <Tool $w={32} $boxed aria-label="显示选项">{P.display}<Caret /></Tool><ToolSep />
            <Tool aria-label="机床">{P.machine}</Tool><Tool aria-label="编辑">{P.edit}</Tool>
          </ToolRow>
          <Tree>
            <Node $in={0}>-1</Node>
            <Node $in={-3} $latin>- Mill Default MM</Node>
            <Node $in={0}>件</Node>
            <Node $in={1}>具设置</Node>
            <Node $in={1}>坯设置</Node>
            <Node $in={-6}>群组-1</Node>
            <Node $in={0} />
            <Node $in={-3} $on>- 外形铣削 (2D) - [WCS: 俯视图] - [刀具面: 俯视图]</Node>
            <Node $in={0}><Ico s={4} v={4}><path d="M0 0h3v3H0" stroke="#889" /></Ico>参数</Node>
            <Node $in={8}>#1 - M1.00 平铣刀 - 10 平铣刀</Node>
            <Node $in={0}><svg width="4" height="12"><path d="M0 2q4 4 1 9H0z" fill="#1d4a70" /></svg>几何图形 - (1) 个串连</Node>
            <Node $in={0}><svg width="4" height="10"><path d="M0 3l3-2M0 6l3-2M0 9l3-2" stroke="#678" /></svg>刀路 - 8.7K - T.NC - 程序编号 0</Node>
          </Tree>
          <PanelTabs>
            <PlainButton>面</PlainButton><PlainButton>层别</PlainButton><PlainButton>最近使用功能</PlainButton>
          </PanelTabs>
        </Panel>

        <View>
          <Canvas>
            <Part />
            <FloatBar>
              <FloatButton $dim aria-label="锁定">{P.lock}</FloatButton>
              <FloatButton $w={62}>{P.box}<FloatText>光标</FloatText><Caret /></FloatButton>
              <FloatButton $w={24} aria-label="坐标">{P.xyz}</FloatButton>
              <FloatButton aria-label="设置">{P.plusGear}</FloatButton>
              <FloatButton $dim aria-label="选择">{P.arrow}</FloatButton>
              <FloatButton $dim aria-label="边界">{P.outline}</FloatButton>
              <FloatButton $dim aria-label="实体边">{P.cube}</FloatButton>
              <FloatButton $dim aria-label="实体面">{P.cube}</FloatButton>
              <FloatButton $dim aria-label="实体">{P.cube}</FloatButton>
              <FloatButton aria-label="背面">{P.face}</FloatButton>
              <FloatButton $w={24} aria-label="窗选">{P.box}</FloatButton>
              <FloatButton $w={14} aria-label="窗选菜单"><Caret /></FloatButton>
              <FloatButton $w={28} aria-label="范围内">{P.yellow}</FloatButton>
              <FloatButton $w={11} aria-label="范围菜单"><Caret /></FloatButton>
              <FloatButton $on $dim aria-label="预选">{P.outline}</FloatButton>
              <FloatButton aria-label="验证选择">{P.tick}</FloatButton>
              <FloatButton aria-label="反选">{P.cycle}</FloatButton>
              <FloatButton $dim aria-label="上次选择">{P.last}</FloatButton>
            </FloatBar>
          </Canvas>
          <Sheets>
            <Sheet>视图单-1</Sheet>
            <SheetRest><PlainButton>+</PlainButton></SheetRest>
          </Sheets>
        </View>
      </Main>

      <Status>
        <Cell $w={97}>截面视图: 关闭</Cell>
        <Cell $w={148}>选择的图素: 0</Cell>
        <Cell $w={24}>X:</Cell><Cell $w={83}>-98.01684</Cell>
        <Cell $w={22}>Y:</Cell><Cell $w={79}>34.93460</Cell>
        <Cell $w={21}>Z:</Cell><DropCell $w={70}>0.00000<Caret c="#7893bd" /></DropCell>
        <Cell $w={29}>3D</Cell>
        <DropCell $w={115}>绘图平面: 俯视图<Caret c="#7893bd" /></DropCell>
        <DropCell $w={114}>刀具平面: 俯视图<Caret c="#7893bd" /></DropCell>
        <DropCell $w={87}>WCS: 俯视图<Caret c="#7893bd" /></DropCell>
        <Ime><IFly s={22} /><ImeMode>中</ImeMode><Ico s={8} v={8}><circle cx="4" cy="3" r="2.300" stroke="#5b78c2" strokeWidth="1.500" /></Ico></Ime>
      </Status>

      <Taskbar>
        <Dock>
          <DockButton aria-label="开始"><Ico s={24} v={24}><path d="M0 0h11.500v11.500H0z" fill="#45b9ee" /><path d="M12.500 0H24v11.500H12.500zM0 12.500h11.500V24H0z" fill="#1f9bdd" /><path d="M12.500 12.500H24V24H12.500z" fill="#0d84cc" /></Ico></DockButton>
          <DockButton aria-label="任务视图"><Ico s={24} v={24}><path d="M7 1h17v16H7z" fill="#fafafa" /><path d="M1 7h18v16H1z" fill="#2a2a2a" /><path d="M7 7h12v10H7z" fill="#bdbdbd" /></Ico></DockButton>
          <DockButton $mark aria-label="文件资源管理器"><Ico s={24} v={24}><path d="M0 1h9l2 3v4H0z" fill="#d99a20" /><path d="M0 5h24v17H0z" fill="#fbd15b" /><path d="M4 15h16v7H4z" fill="#1f79b5" /></Ico></DockButton>
          <DockButton $on aria-label="Mastercam 2023"><Ico s={26} v={26}><path d="M6 2h6l-1 5-3 1H4z" fill="#c42048" /><path d="M2 10l5-1 5-3 6-5h6l-5 15h-5l3-9-6 6-1 3H7l1-4-3 4H2z" fill="#c42048" /><path d="M3 9l8-3M14 12l6-8" stroke="#f2f4fc" strokeWidth=".8" /><text x="13" y="25" fontSize="8" fontWeight="700" fontStyle="italic" textAnchor="middle" fill="#111" fontFamily="DejaVu Sans, sans-serif">2023</text></Ico></DockButton>
          <DockButton $mark aria-label="OBS"><Ico s={24} v={24}><circle cx="12" cy="12" r="10" fill="#1c1c1f" /><path d="M12 12c0-3-2-5-5-5M12 12c3-1 6-1 7 2M12 12c-1 3-1 5-3 7" stroke="#c0b8b4" strokeWidth="1.400" /></Ico></DockButton>
        </Dock>
        <Tray>
          <TrayButton $w={32} aria-label="显示隐藏的图标"><Ico><path d="M3.500 10.500 8 6l4.500 4.500" stroke="#222" strokeWidth="1.500" /></Ico></TrayButton>
          <TrayButton $w={32} aria-label="麦克风"><Ico><path d="M5.500 2.500a2.500 2.500 0 0 1 5 0v5a2.500 2.500 0 0 1-5 0zM3 7c0 6 10 6 10 0M8 11.500V15" stroke="#355f9e" strokeWidth="1.300" /></Ico></TrayButton>
          <TrayButton $w={32} aria-label="输入法"><Ico><path d="M6.500 3V1h3v2h3c2 0 3 1 3 3v3c0 2-1 3-3 3h-3v3h-3v-3h-3c-2 0-3-1-3-3V6c0-2 1-3 3-3z" fill="#fff" stroke="#222" strokeWidth="1.200" /><path d="M4 6h3v3H4zM9 6h3v3H9z" stroke="#222" strokeWidth="1.200" /></Ico></TrayButton>
          <TrayButton $w={44} aria-label="讯飞"><IFly s={17} /></TrayButton>
          <TrayButton $w={32} aria-label="网络"><Ico><path d="M1 6c4-4.500 10-4.500 14 0M3 8.500c3-3.300 7-3.300 10 0M5 11c2-2 4-2 6 0" stroke="#222" strokeWidth="1.300" /><circle cx="8" cy="13" r="1.500" fill="#222" /></Ico></TrayButton>
          <TrayButton $w={14} aria-label="音量"><Ico><path d="M1 6h3l4-4v12l-4-4H1zM10 5.500c1.500 2 1.500 3.500 0 5" stroke="#222" strokeWidth="1.200" /><path d="M12 3.500c3 3 3 6 0 9" stroke="#aab4c0" strokeWidth="1.200" /></Ico></TrayButton>
          <Clock>2</Clock>
        </Tray>
      </Taskbar>
    </Page>
  );
}
